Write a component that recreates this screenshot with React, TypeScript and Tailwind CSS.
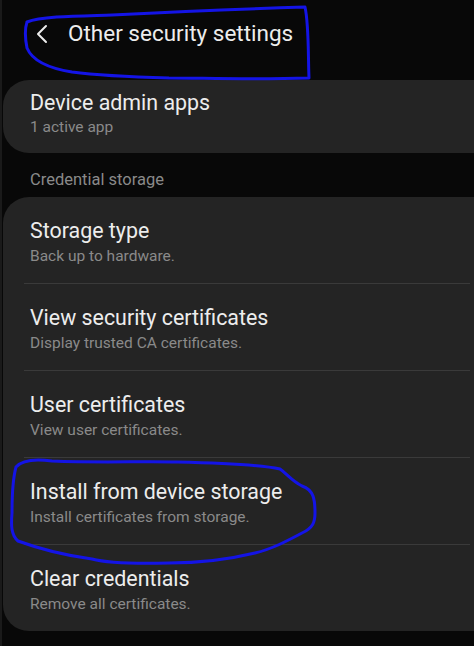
import React from 'react'

type Row = { title: string; sub: string }

const rows: Row[] = [
  { title: 'Storage type', sub: 'Back up to hardware.' },
  { title: 'View security certificates', sub: 'Display trusted CA certificates.' },
  { title: 'User certificates', sub: 'View user certificates.' },
  { title: 'Install from device storage', sub: 'Install certificates from storage.' },
  { title: 'Clear credentials', sub: 'Remove all certificates.' },
]

function Item({ title, sub, last }: Row & { last?: boolean }) {
  return (
    <div className="flex flex-col">
      <div className="h-[86px] pt-[20px] pl-[27px]">
        <div className="text-[21.4px] leading-[27px] text-[#ededed]">{title}</div>
        <div className="mt-[2px] text-[15.5px] leading-[20px] text-[#8a8a8a]">{sub}</div>
      </div>
      {!last && <div className="ml-[21px] mr-[4px] h-px bg-[#3a3a3a]" />}
    </div>
  )
}

// hand-drawn blue marker loops from the screenshot
function Scribbles() {
  return (
    <svg className="absolute inset-0 pointer-events-none" width="474" height="646" viewBox="0 0 474 646">
      <path
        d="M25 22 C 40 16, 80 16, 110 15 C 170 12, 240 9, 303 7 C 307 25, 306 55, 307 78 C 250 80, 200 78, 167 78 C 130 77, 100 76, 70 72 C 45 68, 30 60, 25 48 C 23 38, 23 28, 25 22"
        fill="none" stroke="#1414e6" strokeWidth="3" strokeLinecap="round" strokeLinejoin="round"
      />
      <path
        d="M14 467 C 20 460, 35 459, 50 461 C 100 463, 140 461, 175 462 C 220 463, 260 465, 278 469 C 285 474, 290 481, 300 486 C 312 490, 313 500, 313 513 C 313 522, 311 528, 300 533 C 285 541, 270 549, 253 553 C 220 561, 190 563, 167 563 C 130 564, 105 563, 90 559 C 60 555, 35 548, 16 541 C 9 535, 9 525, 10 513 C 10 495, 11 478, 14 467"
        fill="none" stroke="#1414e6" strokeWidth="3" strokeLinecap="round" strokeLinejoin="round"
      />
    </svg>
  )
}

export default function App() {
  return (
    <div
      className="relative w-[474px] h-[646px] overflow-hidden bg-[#080808] border-l-[2px] border-[#1a1a1a]"
      style={{ fontFamily: 'Roboto, "Noto Sans", sans-serif' }}
    >
      <header className="h-[80px] flex items-start pt-[18px] pl-[33px]">
        <svg width="14" height="20" viewBox="0 0 14 20" className="mt-[6px]">
          <path d="M11 2 L3 10 L11 18" fill="none" stroke="#ededed" strokeWidth="2" strokeLinecap="round" strokeLinejoin="round" />
        </svg>
        <h1 className="ml-[19px] text-[22.5px] leading-[30px] text-[#ededed]">Other security settings</h1>
      </header>

      <div className="ml-[1px] h-[73px] rounded-l-[26px] bg-[#242424] pt-[9px] pl-[27px]">
        <div className="text-[21.4px] leading-[27px] text-[#ededed]">Device admin apps</div>
        <div className="mt-[1px] text-[15.5px] leading-[20px] text-[#8a8a8a]">1 active app</div>
      </div>

      <div className="h-[44px] pl-[28px] pt-[16px] text-[16.5px] leading-[22px] text-[#8a8a8a]">Credential storage</div>

      <div className="ml-[1px] rounded-l-[26px] bg-[#242424] flex flex-col">
        {rows.map((r, i) => (
          <Item key={r.title} {...r} last={i === rows.length - 1} />
        ))}
      </div>

      <Scribbles />
    </div>
  )
}
